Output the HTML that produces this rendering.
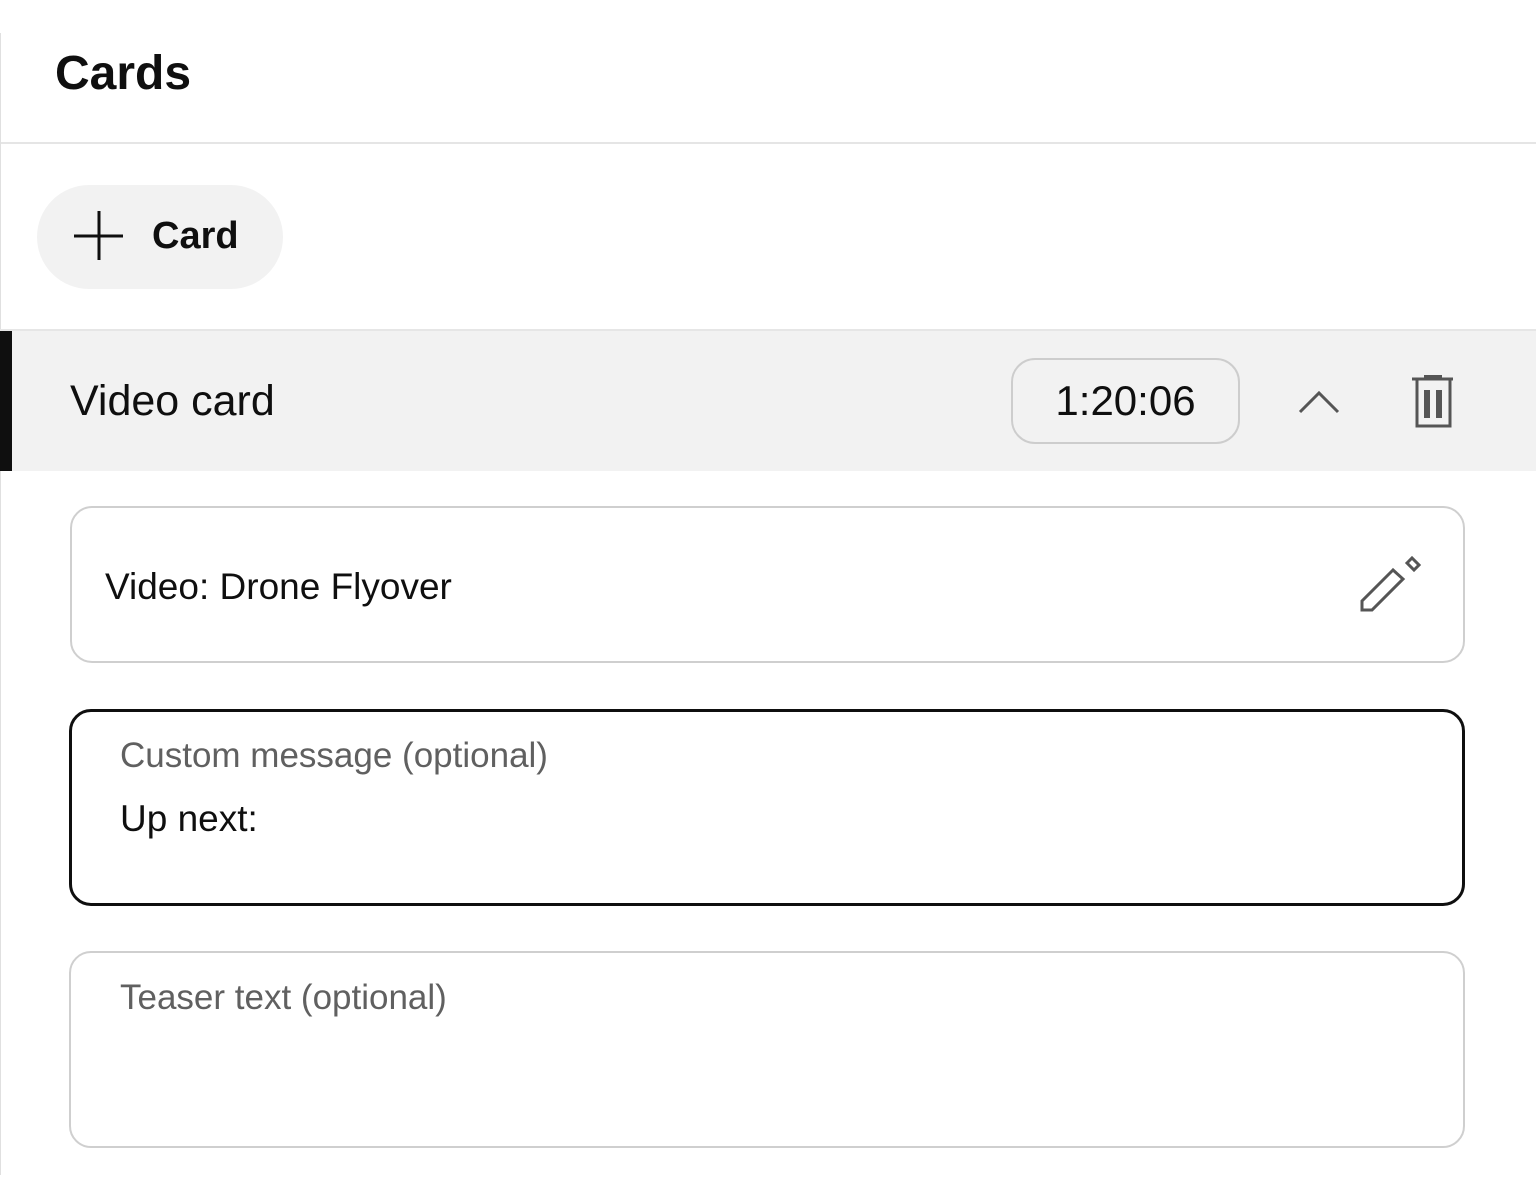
<!DOCTYPE html>
<html><head><meta charset="utf-8"><style>
html,body{margin:0;padding:0;background:#fff;width:1536px;height:1197px;overflow:hidden;font-family:"Liberation Sans",Roboto,sans-serif;color:#0f0f0f}
.abs{position:absolute}
</style></head><body>
<div class="abs" style="left:0;top:33px;width:1px;height:1142px;background:#e0e0e0"></div>
<div class="abs" style="left:55px;top:44px;font-size:48px;font-weight:bold;line-height:60px">Cards</div>
<div class="abs" style="left:1px;top:142px;width:1535px;height:2px;background:#e5e5e5"></div>
<div class="abs" style="left:37px;top:185px;width:246px;height:104px;border-radius:52px;background:#f2f2f2"></div>
<svg class="abs" style="left:72px;top:209px" width="54" height="54"><path d="M2 27H51M27 2V51" stroke="#0f0f0f" stroke-width="3" fill="none"/></svg>
<div class="abs" style="left:152px;top:212px;font-size:38px;font-weight:bold;line-height:48px">Card</div>
<div class="abs" style="left:0;top:329px;width:1536px;height:142px;background:#f2f2f2;border-top:2px solid #e6e6e6;box-sizing:border-box"></div>
<div class="abs" style="left:0;top:331px;width:12px;height:140px;background:#0f0f0f"></div>
<div class="abs" style="left:70px;top:376px;font-size:43px;line-height:50px">Video card</div>
<div class="abs" style="left:1011px;top:358px;width:229px;height:86px;box-sizing:border-box;border:2px solid #cdcdcd;border-radius:24px;font-size:42px;line-height:82px;text-align:center">1:20:06</div>
<svg class="abs" style="left:1296px;top:388px" width="46" height="28"><path d="M4 24L23 5L42 24" stroke="#555" stroke-width="3" fill="none"/></svg>
<svg class="abs" style="left:1395px;top:365px" width="70" height="70"><path d="M17 14H58" stroke="#555" stroke-width="3"/><rect x="29" y="10" width="18" height="4" fill="#555"/><path d="M22 14V61H55V14" stroke="#555" stroke-width="3" fill="none"/><rect x="29" y="25" width="6" height="28" fill="#555"/><rect x="41" y="25" width="6" height="28" fill="#555"/></svg>
<div class="abs" style="left:70px;top:506px;width:1395px;height:157px;box-sizing:border-box;border:2px solid #cfcfcf;border-radius:22px"></div>
<div class="abs" style="left:105px;top:564px;font-size:37px;line-height:46px">Video: Drone Flyover</div>
<svg class="abs" style="left:1350px;top:550px" width="80" height="70"><path d="M43 20L12 51V60H22L53 29Z" stroke="#555" stroke-width="3" fill="none" stroke-linejoin="miter"/><path d="M57 13L62 8L69 15L64 20Z" stroke="#555" stroke-width="3" fill="none"/></svg>
<div class="abs" style="left:69px;top:709px;width:1396px;height:197px;box-sizing:border-box;border:3px solid #0f0f0f;border-radius:22px"></div>
<div class="abs" style="left:120px;top:734px;font-size:35px;line-height:44px;color:#606060">Custom message (optional)</div>
<div class="abs" style="left:120px;top:796px;font-size:37px;line-height:46px">Up next:</div>
<div class="abs" style="left:69px;top:951px;width:1396px;height:197px;box-sizing:border-box;border:2px solid #cfcfcf;border-radius:22px"></div>
<div class="abs" style="left:120px;top:976px;font-size:35px;line-height:44px;color:#606060">Teaser text (optional)</div>
</body></html>
